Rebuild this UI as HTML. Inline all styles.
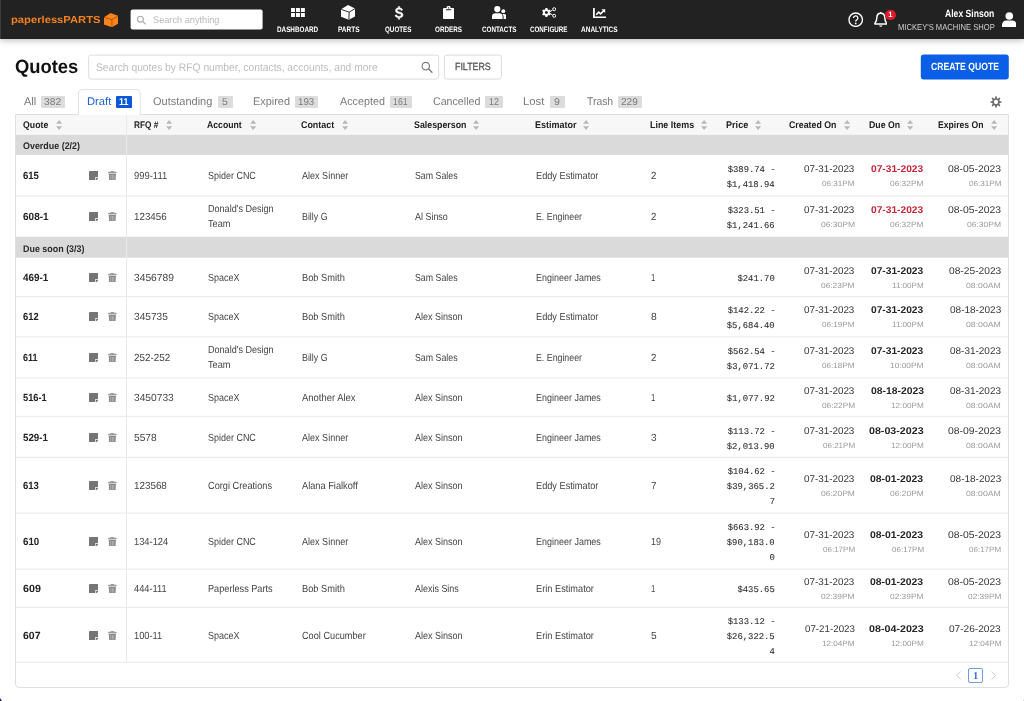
<!DOCTYPE html>
<html lang="en">
<head>
<meta charset="utf-8">
<title>Quotes - Paperless Parts</title>
<style>
*{box-sizing:border-box;margin:0;padding:0}
html,body{width:1024px;height:701px;overflow:hidden;background:#fff}
body{position:relative;font-family:"Liberation Sans",sans-serif;color:#333}
.page{position:absolute;left:0;top:0;width:1024px;height:701px;overflow:hidden;background:#fff;will-change:transform;text-rendering:geometricPrecision}
.t{position:absolute;white-space:nowrap;line-height:16px;height:16px}
.t>i{display:inline-block;font-style:normal;transform-origin:0 0}
.logo{font-family:"Liberation Sans",sans-serif;font-size:10.2px;font-weight:bold;color:#f5821f}
.gph{font-family:"Liberation Sans",sans-serif;font-size:9.5px;font-weight:normal;color:#b8b8b8}
.nav{font-family:"Liberation Sans",sans-serif;font-size:7.9px;font-weight:bold;color:#fff}
.uname{font-family:"Liberation Sans",sans-serif;font-size:10.5px;font-weight:bold;color:#fff}
.uorg{font-family:"Liberation Sans",sans-serif;font-size:8.6px;font-weight:normal;color:#cfcfcf}
.title{font-family:"Liberation Sans",sans-serif;font-size:19.2px;font-weight:bold;color:#111}
.qph{font-family:"Liberation Sans",sans-serif;font-size:11px;font-weight:normal;color:#bdbdbd}
.fbtn{font-family:"Liberation Sans",sans-serif;font-size:10.4px;font-weight:normal;color:#555}
.cbtn{font-family:"Liberation Sans",sans-serif;font-size:10.4px;font-weight:bold;color:#fff}
.tab{font-family:"Liberation Sans",sans-serif;font-size:11.2px;font-weight:normal;color:#7a7a7a}
.taba{font-family:"Liberation Sans",sans-serif;font-size:11.2px;font-weight:normal;color:#1b62d4}
.bd{font-family:"Liberation Sans",sans-serif;font-size:10px;font-weight:normal;color:#7a7a7a}
.bda{font-family:"Liberation Sans",sans-serif;font-size:10px;font-weight:bold;color:#fff}
.th{font-family:"Liberation Sans",sans-serif;font-size:9.7px;font-weight:bold;color:#222}
.gl{font-family:"Liberation Sans",sans-serif;font-size:9.6px;font-weight:bold;color:#2a2a2a}
.q{font-family:"Liberation Sans",sans-serif;font-size:10.4px;font-weight:bold;color:#222}
.c{font-family:"Liberation Sans",sans-serif;font-size:10.3px;font-weight:normal;color:#444}
.m{font-family:"Liberation Mono",monospace;font-size:8.9px;font-weight:normal;color:#303030}
.d{font-family:"Liberation Sans",sans-serif;font-size:9.8px;font-weight:normal;color:#363636}
.db{font-family:"Liberation Sans",sans-serif;font-size:9.8px;font-weight:bold;color:#262626}
.dr{font-family:"Liberation Sans",sans-serif;font-size:9.8px;font-weight:bold;color:#c9283a}
.tm{font-family:"Liberation Sans",sans-serif;font-size:7.6px;font-weight:normal;color:#9a9a9a}
.pg{font-family:"Liberation Serif",serif;font-size:10.5px;font-weight:bold;color:#3a76da}
.m{-webkit-text-stroke:.1px #303030}
.fbtn{-webkit-text-stroke:.3px #555}
/* ---------- top bar ---------- */
.top{position:absolute;left:0;top:0;width:1024px;height:39px;background:#222;box-shadow:0 1px 7px rgba(0,0,0,.3)}
.top .edge{position:absolute;left:0;top:0;width:1px;height:39px;background:#3c3c3e}
.top svg{position:absolute}
.cube{left:103.9px;top:12.95px;width:14.1px;height:14.3px}
.gsearch{position:absolute;left:130px;top:9px;width:132px;height:20px;transform:translate(.6px,.4px);background:#fff;border-radius:2px}
.gsearch svg{left:6.4px;top:5.6px;width:9.6px;height:9.6px}
.nv{fill:#fff}
.help{left:847.8px;top:11.7px;width:15.4px;height:15.4px}
.bell{left:873.6px;top:11.9px;width:13.6px;height:16.2px}
.badge{position:absolute;left:885.2px;top:9.8px;width:10.6px;height:10.6px;border-radius:50%;background:#e0192d}
.badge b{position:absolute;left:0;top:0;width:100%;text-align:center;color:#fff;font-size:7.6px;font-weight:bold;line-height:10.8px}
.uicon{left:1001.8px;top:11.6px;width:14.6px;height:15.5px}
/* ---------- page head ---------- */
.qsearch{position:absolute;left:88px;top:54px;width:351px;height:25px;transform:translate(.2px,.6px);border:1px solid #dcdcdc;border-radius:3px;background:#fff}
.qsearch svg{position:absolute;left:332.2px;top:6.2px;width:11.4px;height:11.4px}
.btn{position:absolute;top:54px;height:25px;border-radius:3px;transform:translateY(.6px)}
.btn.filters{left:444px;width:58px;transform:translate(-.1px,.6px);border:1px solid #dcdcdc;background:#fff}
.btn.create{left:920px;width:88px;background:#0b5fe6;transform:translate(.8px,.6px)}
/* ---------- tabs ---------- */
.tabbox{position:absolute;left:78px;top:89px;width:63px;height:26px;transform:translate(-.15px,.1px);border:1px solid #dedede;border-bottom:none;border-radius:5px 5px 0 0;background:#fff;z-index:3}
.tabs{position:absolute;left:0;top:0;z-index:4}
.bdg{position:absolute;top:96.2px;height:12px;background:#dcdcdc;border-radius:1px}
.bdg.on{background:#0b57d6}
.gear{position:absolute;left:990.37px;top:96.26px;width:12px;height:12px}
/* ---------- table ---------- */
.tbl{position:absolute;border:1px solid #dfdfdf;border-radius:0 0 4px 4px;background:#fff}
.tbl .row{position:absolute;left:0;width:100%}
.row.hrow{background:#f7f7f7}
.row.grow{background:#dadada}
.hline{position:absolute;left:0;width:100%;height:1px;background:#e8e8e8}
.sorti{position:absolute;top:5px;width:6.2px;height:10px}
.sort{display:block;width:6.2px;height:10px;fill:#b8b8b8}
.ici{position:absolute;width:9.6px;height:9.6px}
.ic{display:block}
.ic.note{width:9.6px;height:9.6px;fill:#757575}
.ic.trash{width:8.7px;height:9.5px}
.vline{position:absolute;top:0;width:1px;background:#e9e9e9}
.foot{position:absolute;left:0;width:100%;height:24px}
.chev{position:absolute;width:5.4px;height:9px}
.pgbox{position:absolute;width:15.4px;height:14.6px;border:1px solid #6d9ce6;border-radius:2px}
.corner-bl{position:absolute;left:-7.4px;top:696.5px;width:9px;height:9px;background:#2a2350;border-radius:0 60% 0 0}
.corner-br{position:absolute;left:1022.4px;top:697.5px;width:8px;height:8px;background:#c4c4c4;border-radius:70% 0 0 0}

</style>
</head>
<body>
<div class="page">
<div class="top">
<div class="edge"></div>
<span class="t logo" style="left:11.37px;top:13px"><i style="transform:scaleX(1.1007)">paperlessPARTS</i></span>
<svg class="cube" viewBox="0 0 14.1 14.3"><path d="M6.55 0 L14.1 2.9 V10.6 L7.9 14.3 L0 11.4 V4.3 Z" fill="#f8821c"/><path d="M0.2 4.4 L7.9 6.6 L13.9 3.1 M7.9 6.6 V14.1" fill="none" stroke="#a54e0c" stroke-width="0.85"/></svg>
<div class="gsearch"><svg viewBox="0 0 10 10"><circle cx="4" cy="4" r="3.1" fill="none" stroke="#a8a8a8" stroke-width="1.1"/><path d="M6.3 6.3 L9.4 9.4" stroke="#a8a8a8" stroke-width="1.2" stroke-linecap="round"/></svg></div>
<span class="t gph" style="left:153.34px;top:13px"><i style="transform:scaleX(0.9682)">Search anything</i></span>
<svg class="nv" style="left:291.4px;top:8.1px;width:13.9px;height:8.9px" viewBox="0 0 14 9"><path d="M0 0h4v4.1h-4zM5 0h4v4.1h-4zM10 0h4v4.1h-4zM0 5.1h4V9h-4zM5 5.1h4V9h-4zM10 5.1h4V9h-4z"/></svg><span class="t nav" style="left:277.34px;top:22px"><i style="transform:scaleX(0.8013)">DASHBOARD</i></span>
<svg class="nv" style="left:341.4px;top:5.1px;width:14.1px;height:14.7px" viewBox="0 0 14.1 14.7"><path d="M7.05 0 L14.1 3.5 V11.35 L7.8 14.7 L0 11.7 V4.3 Z"/><path d="M0.2 4.4 L8.2 7.2 L13.9 3.7 M8.2 7.2 L7.9 14.5" fill="none" stroke="#222" stroke-width="0.95"/></svg><span class="t nav" style="left:337.58px;top:22px"><i style="transform:scaleX(0.8234)">PARTS</i></span>
<svg class="nv" style="left:394.7px;top:5.8px;width:8px;height:13.8px;overflow:visible" viewBox="0 0 8.4 13.6"><path stroke="#fff" stroke-width=".55" stroke-linejoin="round" d="M3.55 0 H4.85 V1.5 C6.4 1.7 7.5 2.5 8 3.7 L6.5 4.4 C6.1 3.5 5.4 3.1 4.3 3.1 C3.1 3.1 2.4 3.6 2.4 4.3 C2.4 5.1 3.1 5.4 4.7 5.8 C6.9 6.3 8.4 7 8.4 9 C8.4 10.7 7.1 11.8 4.85 12 V13.6 H3.55 V12 C1.7 11.8 0.4 10.9 0 9.4 L1.6 8.8 C1.9 9.9 2.8 10.5 4.2 10.5 C5.6 10.5 6.5 10 6.5 9.1 C6.5 8.2 5.8 7.9 4 7.5 C2 7 0.55 6.3 0.55 4.4 C0.55 2.8 1.7 1.7 3.55 1.5 Z"/></svg><span class="t nav" style="left:385.25px;top:22px"><i style="transform:scaleX(0.7939)">QUOTES</i></span>
<svg class="nv" style="left:443.2px;top:6.1px;width:11.2px;height:13.2px" viewBox="0 0 11.4 13.2"><path d="M1.2 1.8 H3.6 A2.1 2.1 0 0 1 7.8 1.8 H10.2 A1.2 1.2 0 0 1 11.4 3 V12 A1.2 1.2 0 0 1 10.2 13.2 H1.2 A1.2 1.2 0 0 1 0 12 V3 A1.2 1.2 0 0 1 1.2 1.8 Z M5.7 1.1 A0.7 0.7 0 1 0 5.7 2.5 A0.7 0.7 0 1 0 5.7 1.1 Z M3 3.3 V4.3 H8.4 V3.3 Z" fill-rule="evenodd"/></svg><span class="t nav" style="left:435.25px;top:22px"><i style="transform:scaleX(0.7984)">ORDERS</i></span>
<svg class="nv" style="left:491.8px;top:6.2px;width:14.2px;height:13px" viewBox="0 0 14.2 13"><circle cx="5.3" cy="3.1" r="3.1"/><path d="M0 13 V10.6 A3.4 3.4 0 0 1 3.4 7.2 H7.2 A3.4 3.4 0 0 1 10.6 10.6 V13 Z"/><circle cx="11.3" cy="5.2" r="1.9"/><path d="M11.6 13 V10.4 A4.2 4.2 0 0 0 10.4 7.9 H12 A2.2 2.2 0 0 1 14.2 10.1 V13 Z"/></svg><span class="t nav" style="left:481.50px;top:22px"><i style="transform:scaleX(0.7964)">CONTACTS</i></span>
<svg class="nv" style="left:542px;top:7.4px;width:14.4px;height:11px" viewBox="0 0 14.4 11"><g transform="translate(4.4 5.5)"><path d="M-0.9 -4.4 H0.9 L1.2 -3.2 L2.3 -2.6 L3.4 -3 L4.3 -1.5 L3.4 -0.7 V0.7 L4.3 1.5 L3.4 3 L2.3 2.6 L1.2 3.2 L0.9 4.4 H-0.9 L-1.2 3.2 L-2.3 2.6 L-3.4 3 L-4.3 1.5 L-3.4 0.7 V-0.7 L-4.3 -1.5 L-3.4 -3 L-2.3 -2.6 L-1.2 -3.2 Z M0 -1.5 A1.5 1.5 0 1 0 0 1.5 A1.5 1.5 0 1 0 0 -1.5 Z" fill-rule="evenodd"/></g><circle cx="12.2" cy="2.2" r="1.5" fill="none" stroke="#fff" stroke-width="1"/><circle cx="12.2" cy="8.8" r="1.5" fill="none" stroke="#fff" stroke-width="1"/><path d="M8 4.6 L10.6 3 M8 6.4 L10.6 8" stroke="#fff" stroke-width="1"/></svg><span class="t nav" style="left:530.25px;top:22px"><i style="transform:scaleX(0.7907)">CONFIGURE</i></span>
<svg class="nv" style="left:592.5px;top:7.6px;width:13.4px;height:10.4px" viewBox="0 0 13.4 10.4"><path d="M0.9 0 V9.5 H13.4" fill="none" stroke="#fff" stroke-width="1.8"/><path d="M3.2 6.7 L5.7 4.2 L7.6 5.9 L11 2.5" fill="none" stroke="#fff" stroke-width="1.6"/><path d="M8.4 1.2 H12.2 V5 Z"/></svg><span class="t nav" style="left:581.07px;top:22px"><i style="transform:scaleX(0.8244)">ANALYTICS</i></span>
<svg class="help" viewBox="0 0 16 16"><circle cx="8" cy="8" r="7" fill="none" stroke="#fff" stroke-width="1.4"/><path d="M5.7 6.3 A2.3 2.3 0 1 1 8.9 8.4 C8.2 8.8 8 9.1 8 9.9" fill="none" stroke="#fff" stroke-width="1.4"/><circle cx="8" cy="11.9" r="0.95" fill="#fff"/></svg>
<svg class="bell" viewBox="0 0 14 16.7"><path d="M7 1.2 C4.2 1.2 2.9 3.4 2.9 6 C2.9 9.4 1.6 10.6 0.9 11.6 V12.3 H13.1 V11.6 C12.4 10.6 11.1 9.4 11.1 6 C11.1 3.4 9.8 1.2 7 1.2 Z" fill="none" stroke="#fff" stroke-width="1.5" stroke-linejoin="round"/><path d="M5.2 14 A1.9 1.9 0 0 0 8.8 14 Z" fill="#fff"/><circle cx="7" cy="0.9" r="0.9" fill="#fff"/></svg>
<div class="badge"><b>1</b></div>
<span class="t uname" style="left:945.33px;top:6px"><i style="transform:scaleX(0.8186)">Alex Sinson</i></span>
<span class="t uorg" style="left:897.59px;top:19px"><i style="transform:scaleX(0.8868)">MICKEY'S MACHINE SHOP</i></span>
<svg class="uicon" viewBox="0 0 15 15.5"><circle cx="7.5" cy="3.9" r="3.9" fill="#fff"/><path d="M0 15.5 V13 A4.4 4.4 0 0 1 4.4 8.6 H10.6 A4.4 4.4 0 0 1 15 13 V15.5 Z" fill="#fff"/></svg>
</div>

<span class="t title" style="left:15.06px;top:60px"><i style="transform:scaleX(0.9570)">Quotes</i></span>
<div class="qsearch"><svg viewBox="0 0 12 12"><circle cx="4.8" cy="4.8" r="3.9" fill="none" stroke="#777" stroke-width="1.25"/><path d="M7.7 7.7 L11.3 11.3" stroke="#777" stroke-width="1.4" stroke-linecap="round"/></svg></div>
<span class="t qph" style="left:96.39px;top:60px"><i style="transform:scaleX(0.9342)">Search quotes by RFQ number, contacts, accounts, and more</i></span>
<div class="btn filters"></div><span class="t fbtn" style="left:454.64px;top:60px"><i style="transform:scaleX(0.8521)">FILTERS</i></span>
<div class="btn create"></div><span class="t cbtn" style="left:930.55px;top:60px"><i style="transform:scaleX(0.8315)">CREATE QUOTE</i></span>

<div class="tabbox"></div>
<div class="tabs">
<span class="t tab" style="left:23.80px;top:94px"><i style="transform:scaleX(0.9787)">All</i></span><span class="bdg" style="left:41.00px;width:23.90px"></span><span class="t bd" style="left:44.39px;top:95px"><i style="transform:scaleX(1.0332)">382</i></span>
<span class="t taba" style="left:86.50px;top:94px"><i style="transform:scaleX(1.0025)">Draft</i></span><span class="bdg on" style="left:116.00px;width:16.40px"></span><span class="t bda" style="left:119.37px;top:95px"><i style="transform:scaleX(0.8857)">11</i></span>
<span class="t tab" style="left:153.25px;top:94px"><i style="transform:scaleX(0.9838)">Outstanding</i></span><span class="bdg" style="left:217.50px;width:15.00px"></span><span class="t bd" style="left:222.10px;top:95px"><i style="transform:scaleX(1.0468)">5</i></span>
<span class="t tab" style="left:252.88px;top:94px"><i style="transform:scaleX(0.9754)">Expired</i></span><span class="bdg" style="left:294.50px;width:23.50px"></span><span class="t bd" style="left:298.01px;top:95px"><i style="transform:scaleX(0.9685)">193</i></span>
<span class="t tab" style="left:340.00px;top:94px"><i style="transform:scaleX(0.9617)">Accepted</i></span><span class="bdg" style="left:390.00px;width:21.75px"></span><span class="t bd" style="left:393.41px;top:95px"><i style="transform:scaleX(0.8799)">161</i></span>
<span class="t tab" style="left:432.72px;top:94px"><i style="transform:scaleX(0.9523)">Cancelled</i></span><span class="bdg" style="left:485.00px;width:17.50px"></span><span class="t bd" style="left:488.73px;top:95px"><i style="transform:scaleX(0.8802)">12</i></span>
<span class="t tab" style="left:522.84px;top:94px"><i style="transform:scaleX(1.0128)">Lost</i></span><span class="bdg" style="left:549.50px;width:15.00px"></span><span class="t bd" style="left:554.06px;top:95px"><i style="transform:scaleX(1.0596)">9</i></span>
<span class="t tab" style="left:586.54px;top:94px"><i style="transform:scaleX(0.9248)">Trash</i></span><span class="bdg" style="left:617.50px;width:24.25px"></span><span class="t bd" style="left:621.22px;top:95px"><i style="transform:scaleX(1.0051)">229</i></span>
</div>
<svg class="gear" viewBox="-6 -6 12 12"><path d="M-1.10 -3.59 L-0.55 -5.67 L0.55 -5.67 L1.10 -3.59 L1.76 -3.31 L3.63 -4.40 L4.40 -3.63 L3.31 -1.76 L3.59 -1.10 L5.67 -0.55 L5.67 0.55 L3.59 1.10 L3.31 1.76 L4.40 3.63 L3.63 4.40 L1.76 3.31 L1.10 3.59 L0.55 5.67 L-0.55 5.67 L-1.10 3.59 L-1.76 3.31 L-3.63 4.40 L-4.40 3.63 L-3.31 1.76 L-3.59 1.10 L-5.67 0.55 L-5.67 -0.55 L-3.59 -1.10 L-3.31 -1.76 L-4.40 -3.63 L-3.63 -4.40 L-1.76 -3.31 Z M0 -2.15 A2.15 2.15 0 1 0 0 2.15 A2.15 2.15 0 1 0 0 -2.15 Z" fill="#6b6b6b" fill-rule="evenodd"/></svg>
<div class="tbl" style="left:15px;top:114px;width:994px;height:574px">
<div class="row hrow" style="top:0px;height:20px">
<span class="t th" style="left:7.40px;top:3px"><i style="transform:scaleX(0.9019)">Quote</i></span><span class="sorti" style="left:39.90px"><svg class="sort" viewBox="0 0 6 10"><path d="M3 0 L6 3.7 H0 Z M3 10 L6 6.3 H0 Z"/></svg></span>
<span class="t th" style="left:117.71px;top:3px"><i style="transform:scaleX(0.8535)">RFQ #</i></span><span class="sorti" style="left:150.25px"><svg class="sort" viewBox="0 0 6 10"><path d="M3 0 L6 3.7 H0 Z M3 10 L6 6.3 H0 Z"/></svg></span>
<span class="t th" style="left:191.33px;top:3px"><i style="transform:scaleX(0.8954)">Account</i></span><span class="sorti" style="left:233.60px"><svg class="sort" viewBox="0 0 6 10"><path d="M3 0 L6 3.7 H0 Z M3 10 L6 6.3 H0 Z"/></svg></span>
<span class="t th" style="left:285.39px;top:3px"><i style="transform:scaleX(0.9189)">Contact</i></span><span class="sorti" style="left:325.80px"><svg class="sort" viewBox="0 0 6 10"><path d="M3 0 L6 3.7 H0 Z M3 10 L6 6.3 H0 Z"/></svg></span>
<span class="t th" style="left:398.28px;top:3px"><i style="transform:scaleX(0.9102)">Salesperson</i></span><span class="sorti" style="left:457.10px"><svg class="sort" viewBox="0 0 6 10"><path d="M3 0 L6 3.7 H0 Z M3 10 L6 6.3 H0 Z"/></svg></span>
<span class="t th" style="left:519.17px;top:3px"><i style="transform:scaleX(0.9267)">Estimator</i></span><span class="sorti" style="left:567.40px"><svg class="sort" viewBox="0 0 6 10"><path d="M3 0 L6 3.7 H0 Z M3 10 L6 6.3 H0 Z"/></svg></span>
<span class="t th" style="left:633.92px;top:3px"><i style="transform:scaleX(0.9203)">Line Items</i></span><span class="sorti" style="left:684.60px"><svg class="sort" viewBox="0 0 6 10"><path d="M3 0 L6 3.7 H0 Z M3 10 L6 6.3 H0 Z"/></svg></span>
<span class="t th" style="left:710.31px;top:3px"><i style="transform:scaleX(0.9387)">Price</i></span><span class="sorti" style="left:739.40px"><svg class="sort" viewBox="0 0 6 10"><path d="M3 0 L6 3.7 H0 Z M3 10 L6 6.3 H0 Z"/></svg></span>
<span class="t th" style="left:773.35px;top:3px"><i style="transform:scaleX(0.9083)">Created On</i></span><span class="sorti" style="left:828.00px"><svg class="sort" viewBox="0 0 6 10"><path d="M3 0 L6 3.7 H0 Z M3 10 L6 6.3 H0 Z"/></svg></span>
<span class="t th" style="left:852.93px;top:3px"><i style="transform:scaleX(0.9017)">Due On</i></span><span class="sorti" style="left:890.90px"><svg class="sort" viewBox="0 0 6 10"><path d="M3 0 L6 3.7 H0 Z M3 10 L6 6.3 H0 Z"/></svg></span>
<span class="t th" style="left:921.94px;top:3px"><i style="transform:scaleX(0.8901)">Expires On</i></span><span class="sorti" style="left:974.70px"><svg class="sort" viewBox="0 0 6 10"><path d="M3 0 L6 3.7 H0 Z M3 10 L6 6.3 H0 Z"/></svg></span>
</div>
<div class="row grow" style="top:19px;height:20px;transform:translateY(0.90px)"><span class="t gl" style="left:7.39px;top:4px"><i style="transform:scaleX(0.9296)">Overdue (2/2)</i></span></div>
<div class="row drow" style="top:40px;height:41px">
<span class="t q" style="left:7.26px;top:14px"><i style="transform:scaleX(0.9183)">615</i></span><span class="ici" style="left:72.70px;top:15.7px"><svg class="ic note" viewBox="0 0 10 10"><path d="M0 1 A1 1 0 0 1 1 0 H9 A1 1 0 0 1 10 1 V6.3 H7.3 A1 1 0 0 0 6.3 7.3 V10 H1 A1 1 0 0 1 0 9 Z"/><path d="M7 10 V7.6 A0.6 0.6 0 0 1 7.6 7 H10 V7.1 Q10 7.5 9.75 7.75 L7.75 9.75 Q7.5 10 7.1 10 Z"/></svg></span><span class="ici" style="left:91.90px;top:15.8px"><svg class="ic trash" viewBox="0 0 9 10"><path d="M3 0.1 H6 L6.5 0.9 H8.6 A0.4 0.4 0 0 1 9 1.3 V2.3 H0 V1.3 A0.4 0.4 0 0 1 0.4 0.9 H2.5 Z" fill="#9c9c9c"/><path d="M0.7 3 H8.3 L7.9 9.2 A0.85 0.85 0 0 1 7.05 10 H1.95 A0.85 0.85 0 0 1 1.1 9.2 Z" fill="#8a8a8a"/><path d="M2.5 4.1 H3.3 V8.9 H2.5 Z M4.1 4.1 H4.9 V8.9 H4.1 Z M5.7 4.1 H6.5 V8.9 H5.7 Z" fill="#b9b9b9"/></svg></span><span class="t c" style="left:117.66px;top:14px"><i style="transform:scaleX(0.9151)">999-111</i></span><span class="t c" style="left:191.50px;top:14px"><i style="transform:scaleX(0.8708)">Spider CNC</i></span><span class="t c" style="left:286.05px;top:14px"><i style="transform:scaleX(0.8791)">Alex Sinner</i></span><span class="t c" style="left:398.50px;top:14px"><i style="transform:scaleX(0.8554)">Sam Sales</i></span><span class="t c" style="left:519.76px;top:14px"><i style="transform:scaleX(0.8937)">Eddy Estimator</i></span><span class="t c" style="left:634.60px;top:14px"><i style="transform:scaleX(0.9322)">2</i></span>
<span class="t m" style="left:711.66px;top:7px"><i style="transform:scaleX(1.0000)">$389.74 -</i></span><span class="t m" style="left:710.68px;top:22px"><i style="transform:scaleX(1.0000)">$1,418.94</i></span><span class="t d" style="left:788.16px;top:7px"><i style="transform:scaleX(1.0044)">07-31-2023</i></span><span class="t tm" style="left:806.32px;top:21px"><i style="transform:scaleX(1.0656)">06:31PM</i></span><span class="t dr" style="left:855.24px;top:7px"><i style="transform:scaleX(1.0418)">07-31-2023</i></span><span class="t tm" style="left:874.28px;top:21px"><i style="transform:scaleX(1.1005)">06:32PM</i></span><span class="t d" style="left:932.02px;top:7px"><i style="transform:scaleX(1.0595)">08-05-2023</i></span><span class="t tm" style="left:952.92px;top:21px"><i style="transform:scaleX(1.0656)">06:31PM</i></span>
</div>
<div class="row drow" style="top:81px;height:41px">
<span class="t q" style="left:7.26px;top:14px"><i style="transform:scaleX(0.9637)">608-1</i></span><span class="ici" style="left:72.70px;top:15.7px"><svg class="ic note" viewBox="0 0 10 10"><path d="M0 1 A1 1 0 0 1 1 0 H9 A1 1 0 0 1 10 1 V6.3 H7.3 A1 1 0 0 0 6.3 7.3 V10 H1 A1 1 0 0 1 0 9 Z"/><path d="M7 10 V7.6 A0.6 0.6 0 0 1 7.6 7 H10 V7.1 Q10 7.5 9.75 7.75 L7.75 9.75 Q7.5 10 7.1 10 Z"/></svg></span><span class="ici" style="left:91.90px;top:15.8px"><svg class="ic trash" viewBox="0 0 9 10"><path d="M3 0.1 H6 L6.5 0.9 H8.6 A0.4 0.4 0 0 1 9 1.3 V2.3 H0 V1.3 A0.4 0.4 0 0 1 0.4 0.9 H2.5 Z" fill="#9c9c9c"/><path d="M0.7 3 H8.3 L7.9 9.2 A0.85 0.85 0 0 1 7.05 10 H1.95 A0.85 0.85 0 0 1 1.1 9.2 Z" fill="#8a8a8a"/><path d="M2.5 4.1 H3.3 V8.9 H2.5 Z M4.1 4.1 H4.9 V8.9 H4.1 Z M5.7 4.1 H6.5 V8.9 H5.7 Z" fill="#b9b9b9"/></svg></span><span class="t c" style="left:117.66px;top:14px"><i style="transform:scaleX(0.9515)">123456</i></span><span class="t c" style="left:191.50px;top:6px"><i style="transform:scaleX(0.8793)">Donald's Design</i></span><span class="t c" style="left:191.50px;top:21px"><i style="transform:scaleX(0.8944)">Team</i></span><span class="t c" style="left:286.05px;top:14px"><i style="transform:scaleX(0.8573)">Billy G</i></span><span class="t c" style="left:398.50px;top:14px"><i style="transform:scaleX(0.8680)">Al Sinso</i></span><span class="t c" style="left:519.76px;top:14px"><i style="transform:scaleX(0.8547)">E. Engineer</i></span><span class="t c" style="left:634.60px;top:14px"><i style="transform:scaleX(0.9322)">2</i></span>
<span class="t m" style="left:711.66px;top:7px"><i style="transform:scaleX(1.0000)">$323.51 -</i></span><span class="t m" style="left:710.77px;top:22px"><i style="transform:scaleX(1.0000)">$1,241.66</i></span><span class="t d" style="left:788.16px;top:7px"><i style="transform:scaleX(1.0044)">07-31-2023</i></span><span class="t tm" style="left:804.59px;top:21px"><i style="transform:scaleX(1.1236)">06:30PM</i></span><span class="t dr" style="left:855.24px;top:7px"><i style="transform:scaleX(1.0418)">07-31-2023</i></span><span class="t tm" style="left:874.28px;top:21px"><i style="transform:scaleX(1.1005)">06:32PM</i></span><span class="t d" style="left:932.02px;top:7px"><i style="transform:scaleX(1.0595)">08-05-2023</i></span><span class="t tm" style="left:951.19px;top:21px"><i style="transform:scaleX(1.1236)">06:30PM</i></span>
</div>
<div class="row grow" style="top:121px;height:21px;transform:translateY(0.75px)"><span class="t gl" style="left:7.17px;top:5px"><i style="transform:scaleX(0.9300)">Due soon (3/3)</i></span></div>
<div class="row drow" style="top:143px;height:39px">
<span class="t q" style="left:7.26px;top:13px"><i style="transform:scaleX(0.9514)">469-1</i></span><span class="ici" style="left:72.70px;top:14.7px"><svg class="ic note" viewBox="0 0 10 10"><path d="M0 1 A1 1 0 0 1 1 0 H9 A1 1 0 0 1 10 1 V6.3 H7.3 A1 1 0 0 0 6.3 7.3 V10 H1 A1 1 0 0 1 0 9 Z"/><path d="M7 10 V7.6 A0.6 0.6 0 0 1 7.6 7 H10 V7.1 Q10 7.5 9.75 7.75 L7.75 9.75 Q7.5 10 7.1 10 Z"/></svg></span><span class="ici" style="left:91.90px;top:14.8px"><svg class="ic trash" viewBox="0 0 9 10"><path d="M3 0.1 H6 L6.5 0.9 H8.6 A0.4 0.4 0 0 1 9 1.3 V2.3 H0 V1.3 A0.4 0.4 0 0 1 0.4 0.9 H2.5 Z" fill="#9c9c9c"/><path d="M0.7 3 H8.3 L7.9 9.2 A0.85 0.85 0 0 1 7.05 10 H1.95 A0.85 0.85 0 0 1 1.1 9.2 Z" fill="#8a8a8a"/><path d="M2.5 4.1 H3.3 V8.9 H2.5 Z M4.1 4.1 H4.9 V8.9 H4.1 Z M5.7 4.1 H6.5 V8.9 H5.7 Z" fill="#b9b9b9"/></svg></span><span class="t c" style="left:117.66px;top:13px"><i style="transform:scaleX(0.9961)">3456789</i></span><span class="t c" style="left:191.50px;top:13px"><i style="transform:scaleX(0.8742)">SpaceX</i></span><span class="t c" style="left:286.05px;top:13px"><i style="transform:scaleX(0.9021)">Bob Smith</i></span><span class="t c" style="left:398.50px;top:13px"><i style="transform:scaleX(0.8554)">Sam Sales</i></span><span class="t c" style="left:519.76px;top:13px"><i style="transform:scaleX(0.8713)">Engineer James</i></span><span class="t c" style="left:634.60px;top:13px"><i style="transform:scaleX(0.7492)">1</i></span>
<span class="t m" style="left:721.45px;top:13px"><i style="transform:scaleX(1.0000)">$241.70</i></span><span class="t d" style="left:788.16px;top:6px"><i style="transform:scaleX(1.0044)">07-31-2023</i></span><span class="t tm" style="left:805.28px;top:20px"><i style="transform:scaleX(1.1005)">06:23PM</i></span><span class="t db" style="left:855.24px;top:6px"><i style="transform:scaleX(1.0418)">07-31-2023</i></span><span class="t tm" style="left:875.99px;top:20px"><i style="transform:scaleX(1.0633)">11:00PM</i></span><span class="t d" style="left:932.82px;top:6px"><i style="transform:scaleX(1.0434)">08-25-2023</i></span><span class="t tm" style="left:950.48px;top:20px"><i style="transform:scaleX(1.1473)">08:00AM</i></span>
</div>
<div class="row drow" style="top:182px;height:40px">
<span class="t q" style="left:7.26px;top:13px"><i style="transform:scaleX(0.9029)">612</i></span><span class="ici" style="left:72.70px;top:14.7px"><svg class="ic note" viewBox="0 0 10 10"><path d="M0 1 A1 1 0 0 1 1 0 H9 A1 1 0 0 1 10 1 V6.3 H7.3 A1 1 0 0 0 6.3 7.3 V10 H1 A1 1 0 0 1 0 9 Z"/><path d="M7 10 V7.6 A0.6 0.6 0 0 1 7.6 7 H10 V7.1 Q10 7.5 9.75 7.75 L7.75 9.75 Q7.5 10 7.1 10 Z"/></svg></span><span class="ici" style="left:91.90px;top:14.8px"><svg class="ic trash" viewBox="0 0 9 10"><path d="M3 0.1 H6 L6.5 0.9 H8.6 A0.4 0.4 0 0 1 9 1.3 V2.3 H0 V1.3 A0.4 0.4 0 0 1 0.4 0.9 H2.5 Z" fill="#9c9c9c"/><path d="M0.7 3 H8.3 L7.9 9.2 A0.85 0.85 0 0 1 7.05 10 H1.95 A0.85 0.85 0 0 1 1.1 9.2 Z" fill="#8a8a8a"/><path d="M2.5 4.1 H3.3 V8.9 H2.5 Z M4.1 4.1 H4.9 V8.9 H4.1 Z M5.7 4.1 H6.5 V8.9 H5.7 Z" fill="#b9b9b9"/></svg></span><span class="t c" style="left:117.66px;top:13px"><i style="transform:scaleX(0.9848)">345735</i></span><span class="t c" style="left:191.50px;top:13px"><i style="transform:scaleX(0.8742)">SpaceX</i></span><span class="t c" style="left:286.05px;top:13px"><i style="transform:scaleX(0.9021)">Bob Smith</i></span><span class="t c" style="left:398.50px;top:13px"><i style="transform:scaleX(0.8757)">Alex Sinson</i></span><span class="t c" style="left:519.76px;top:13px"><i style="transform:scaleX(0.8937)">Eddy Estimator</i></span><span class="t c" style="left:634.60px;top:13px"><i style="transform:scaleX(1.0021)">8</i></span>
<span class="t m" style="left:711.66px;top:6px"><i style="transform:scaleX(1.0000)">$142.22 -</i></span><span class="t m" style="left:710.77px;top:21px"><i style="transform:scaleX(1.0000)">$5,684.40</i></span><span class="t d" style="left:788.16px;top:6px"><i style="transform:scaleX(1.0044)">07-31-2023</i></span><span class="t tm" style="left:806.18px;top:20px"><i style="transform:scaleX(1.0701)">06:19PM</i></span><span class="t db" style="left:855.24px;top:6px"><i style="transform:scaleX(1.0418)">07-31-2023</i></span><span class="t tm" style="left:875.99px;top:20px"><i style="transform:scaleX(1.0633)">11:00PM</i></span><span class="t d" style="left:933.89px;top:6px"><i style="transform:scaleX(1.0217)">08-18-2023</i></span><span class="t tm" style="left:950.48px;top:20px"><i style="transform:scaleX(1.1473)">08:00AM</i></span>
</div>
<div class="row drow" style="top:222px;height:41px">
<span class="t q" style="left:7.26px;top:14px"><i style="transform:scaleX(0.8611)">611</i></span><span class="ici" style="left:72.70px;top:15.7px"><svg class="ic note" viewBox="0 0 10 10"><path d="M0 1 A1 1 0 0 1 1 0 H9 A1 1 0 0 1 10 1 V6.3 H7.3 A1 1 0 0 0 6.3 7.3 V10 H1 A1 1 0 0 1 0 9 Z"/><path d="M7 10 V7.6 A0.6 0.6 0 0 1 7.6 7 H10 V7.1 Q10 7.5 9.75 7.75 L7.75 9.75 Q7.5 10 7.1 10 Z"/></svg></span><span class="ici" style="left:91.90px;top:15.8px"><svg class="ic trash" viewBox="0 0 9 10"><path d="M3 0.1 H6 L6.5 0.9 H8.6 A0.4 0.4 0 0 1 9 1.3 V2.3 H0 V1.3 A0.4 0.4 0 0 1 0.4 0.9 H2.5 Z" fill="#9c9c9c"/><path d="M0.7 3 H8.3 L7.9 9.2 A0.85 0.85 0 0 1 7.05 10 H1.95 A0.85 0.85 0 0 1 1.1 9.2 Z" fill="#8a8a8a"/><path d="M2.5 4.1 H3.3 V8.9 H2.5 Z M4.1 4.1 H4.9 V8.9 H4.1 Z M5.7 4.1 H6.5 V8.9 H5.7 Z" fill="#b9b9b9"/></svg></span><span class="t c" style="left:117.66px;top:14px"><i style="transform:scaleX(0.9566)">252-252</i></span><span class="t c" style="left:191.50px;top:6px"><i style="transform:scaleX(0.8793)">Donald's Design</i></span><span class="t c" style="left:191.50px;top:21px"><i style="transform:scaleX(0.8944)">Team</i></span><span class="t c" style="left:286.05px;top:14px"><i style="transform:scaleX(0.8573)">Billy G</i></span><span class="t c" style="left:398.50px;top:14px"><i style="transform:scaleX(0.8554)">Sam Sales</i></span><span class="t c" style="left:519.76px;top:14px"><i style="transform:scaleX(0.8547)">E. Engineer</i></span><span class="t c" style="left:634.60px;top:14px"><i style="transform:scaleX(0.9322)">2</i></span>
<span class="t m" style="left:711.66px;top:7px"><i style="transform:scaleX(1.0000)">$562.54 -</i></span><span class="t m" style="left:710.86px;top:22px"><i style="transform:scaleX(1.0000)">$3,071.72</i></span><span class="t d" style="left:788.16px;top:7px"><i style="transform:scaleX(1.0044)">07-31-2023</i></span><span class="t tm" style="left:806.11px;top:21px"><i style="transform:scaleX(1.0727)">06:18PM</i></span><span class="t db" style="left:855.24px;top:7px"><i style="transform:scaleX(1.0418)">07-31-2023</i></span><span class="t tm" style="left:874.25px;top:21px"><i style="transform:scaleX(1.1014)">10:00PM</i></span><span class="t d" style="left:934.14px;top:7px"><i style="transform:scaleX(1.0169)">08-31-2023</i></span><span class="t tm" style="left:950.48px;top:21px"><i style="transform:scaleX(1.1473)">08:00AM</i></span>
</div>
<div class="row drow" style="top:263px;height:39px">
<span class="t q" style="left:7.26px;top:13px"><i style="transform:scaleX(0.8939)">516-1</i></span><span class="ici" style="left:72.70px;top:14.7px"><svg class="ic note" viewBox="0 0 10 10"><path d="M0 1 A1 1 0 0 1 1 0 H9 A1 1 0 0 1 10 1 V6.3 H7.3 A1 1 0 0 0 6.3 7.3 V10 H1 A1 1 0 0 1 0 9 Z"/><path d="M7 10 V7.6 A0.6 0.6 0 0 1 7.6 7 H10 V7.1 Q10 7.5 9.75 7.75 L7.75 9.75 Q7.5 10 7.1 10 Z"/></svg></span><span class="ici" style="left:91.90px;top:14.8px"><svg class="ic trash" viewBox="0 0 9 10"><path d="M3 0.1 H6 L6.5 0.9 H8.6 A0.4 0.4 0 0 1 9 1.3 V2.3 H0 V1.3 A0.4 0.4 0 0 1 0.4 0.9 H2.5 Z" fill="#9c9c9c"/><path d="M0.7 3 H8.3 L7.9 9.2 A0.85 0.85 0 0 1 7.05 10 H1.95 A0.85 0.85 0 0 1 1.1 9.2 Z" fill="#8a8a8a"/><path d="M2.5 4.1 H3.3 V8.9 H2.5 Z M4.1 4.1 H4.9 V8.9 H4.1 Z M5.7 4.1 H6.5 V8.9 H5.7 Z" fill="#b9b9b9"/></svg></span><span class="t c" style="left:117.66px;top:13px"><i style="transform:scaleX(0.9925)">3450733</i></span><span class="t c" style="left:191.50px;top:13px"><i style="transform:scaleX(0.8742)">SpaceX</i></span><span class="t c" style="left:286.05px;top:13px"><i style="transform:scaleX(0.9164)">Another Alex</i></span><span class="t c" style="left:398.50px;top:13px"><i style="transform:scaleX(0.8757)">Alex Sinson</i></span><span class="t c" style="left:519.76px;top:13px"><i style="transform:scaleX(0.8713)">Engineer James</i></span><span class="t c" style="left:634.60px;top:13px"><i style="transform:scaleX(0.7492)">1</i></span>
<span class="t m" style="left:710.86px;top:13px"><i style="transform:scaleX(1.0000)">$1,077.92</i></span><span class="t d" style="left:788.16px;top:6px"><i style="transform:scaleX(1.0044)">07-31-2023</i></span><span class="t tm" style="left:805.60px;top:20px"><i style="transform:scaleX(1.0896)">06:22PM</i></span><span class="t db" style="left:854.53px;top:6px"><i style="transform:scaleX(1.0561)">08-18-2023</i></span><span class="t tm" style="left:874.95px;top:20px"><i style="transform:scaleX(1.0780)">12:00PM</i></span><span class="t d" style="left:934.14px;top:6px"><i style="transform:scaleX(1.0169)">08-31-2023</i></span><span class="t tm" style="left:950.48px;top:20px"><i style="transform:scaleX(1.1473)">08:00AM</i></span>
</div>
<div class="row drow" style="top:302px;height:41px">
<span class="t q" style="left:7.26px;top:14px"><i style="transform:scaleX(0.9385)">529-1</i></span><span class="ici" style="left:72.70px;top:15.7px"><svg class="ic note" viewBox="0 0 10 10"><path d="M0 1 A1 1 0 0 1 1 0 H9 A1 1 0 0 1 10 1 V6.3 H7.3 A1 1 0 0 0 6.3 7.3 V10 H1 A1 1 0 0 1 0 9 Z"/><path d="M7 10 V7.6 A0.6 0.6 0 0 1 7.6 7 H10 V7.1 Q10 7.5 9.75 7.75 L7.75 9.75 Q7.5 10 7.1 10 Z"/></svg></span><span class="ici" style="left:91.90px;top:15.8px"><svg class="ic trash" viewBox="0 0 9 10"><path d="M3 0.1 H6 L6.5 0.9 H8.6 A0.4 0.4 0 0 1 9 1.3 V2.3 H0 V1.3 A0.4 0.4 0 0 1 0.4 0.9 H2.5 Z" fill="#9c9c9c"/><path d="M0.7 3 H8.3 L7.9 9.2 A0.85 0.85 0 0 1 7.05 10 H1.95 A0.85 0.85 0 0 1 1.1 9.2 Z" fill="#8a8a8a"/><path d="M2.5 4.1 H3.3 V8.9 H2.5 Z M4.1 4.1 H4.9 V8.9 H4.1 Z M5.7 4.1 H6.5 V8.9 H5.7 Z" fill="#b9b9b9"/></svg></span><span class="t c" style="left:117.66px;top:14px"><i style="transform:scaleX(0.9891)">5578</i></span><span class="t c" style="left:191.50px;top:14px"><i style="transform:scaleX(0.8708)">Spider CNC</i></span><span class="t c" style="left:286.05px;top:14px"><i style="transform:scaleX(0.8791)">Alex Sinner</i></span><span class="t c" style="left:398.50px;top:14px"><i style="transform:scaleX(0.8757)">Alex Sinson</i></span><span class="t c" style="left:519.76px;top:14px"><i style="transform:scaleX(0.8713)">Engineer James</i></span><span class="t c" style="left:634.60px;top:14px"><i style="transform:scaleX(0.9738)">3</i></span>
<span class="t m" style="left:711.66px;top:7px"><i style="transform:scaleX(1.0000)">$113.72 -</i></span><span class="t m" style="left:710.77px;top:22px"><i style="transform:scaleX(1.0000)">$2,013.90</i></span><span class="t d" style="left:788.16px;top:7px"><i style="transform:scaleX(1.0044)">07-31-2023</i></span><span class="t tm" style="left:806.64px;top:21px"><i style="transform:scaleX(1.0547)">06:21PM</i></span><span class="t db" style="left:852.91px;top:7px"><i style="transform:scaleX(1.0887)">08-03-2023</i></span><span class="t tm" style="left:874.95px;top:21px"><i style="transform:scaleX(1.0780)">12:00PM</i></span><span class="t d" style="left:931.98px;top:7px"><i style="transform:scaleX(1.0602)">08-09-2023</i></span><span class="t tm" style="left:950.48px;top:21px"><i style="transform:scaleX(1.1473)">08:00AM</i></span>
</div>
<div class="row drow" style="top:343px;height:56px">
<span class="t q" style="left:7.26px;top:21px"><i style="transform:scaleX(0.9188)">613</i></span><span class="ici" style="left:72.70px;top:22.7px"><svg class="ic note" viewBox="0 0 10 10"><path d="M0 1 A1 1 0 0 1 1 0 H9 A1 1 0 0 1 10 1 V6.3 H7.3 A1 1 0 0 0 6.3 7.3 V10 H1 A1 1 0 0 1 0 9 Z"/><path d="M7 10 V7.6 A0.6 0.6 0 0 1 7.6 7 H10 V7.1 Q10 7.5 9.75 7.75 L7.75 9.75 Q7.5 10 7.1 10 Z"/></svg></span><span class="ici" style="left:91.90px;top:22.8px"><svg class="ic trash" viewBox="0 0 9 10"><path d="M3 0.1 H6 L6.5 0.9 H8.6 A0.4 0.4 0 0 1 9 1.3 V2.3 H0 V1.3 A0.4 0.4 0 0 1 0.4 0.9 H2.5 Z" fill="#9c9c9c"/><path d="M0.7 3 H8.3 L7.9 9.2 A0.85 0.85 0 0 1 7.05 10 H1.95 A0.85 0.85 0 0 1 1.1 9.2 Z" fill="#8a8a8a"/><path d="M2.5 4.1 H3.3 V8.9 H2.5 Z M4.1 4.1 H4.9 V8.9 H4.1 Z M5.7 4.1 H6.5 V8.9 H5.7 Z" fill="#b9b9b9"/></svg></span><span class="t c" style="left:117.66px;top:21px"><i style="transform:scaleX(0.9560)">123568</i></span><span class="t c" style="left:191.50px;top:21px"><i style="transform:scaleX(0.8944)">Corgi Creations</i></span><span class="t c" style="left:286.05px;top:21px"><i style="transform:scaleX(0.8973)">Alana Fialkoff</i></span><span class="t c" style="left:398.50px;top:21px"><i style="transform:scaleX(0.8757)">Alex Sinson</i></span><span class="t c" style="left:519.76px;top:21px"><i style="transform:scaleX(0.8937)">Eddy Estimator</i></span><span class="t c" style="left:634.60px;top:21px"><i style="transform:scaleX(0.9695)">7</i></span>
<span class="t m" style="left:711.66px;top:6px"><i style="transform:scaleX(1.0000)">$104.62 -</i></span><span class="t m" style="left:710.86px;top:21px"><i style="transform:scaleX(1.0000)">$39,365.2</i></span><span class="t m" style="left:753.63px;top:36px"><i style="transform:scaleX(1.0000)">7</i></span><span class="t d" style="left:788.16px;top:14px"><i style="transform:scaleX(1.0044)">07-31-2023</i></span><span class="t tm" style="left:804.91px;top:28px"><i style="transform:scaleX(1.1127)">06:20PM</i></span><span class="t db" style="left:854.31px;top:14px"><i style="transform:scaleX(1.0605)">08-01-2023</i></span><span class="t tm" style="left:873.91px;top:28px"><i style="transform:scaleX(1.1127)">06:20PM</i></span><span class="t d" style="left:933.89px;top:14px"><i style="transform:scaleX(1.0217)">08-18-2023</i></span><span class="t tm" style="left:950.48px;top:28px"><i style="transform:scaleX(1.1473)">08:00AM</i></span>
</div>
<div class="row drow" style="top:399px;height:56px">
<span class="t q" style="left:7.26px;top:21px"><i style="transform:scaleX(0.9373)">610</i></span><span class="ici" style="left:72.70px;top:22.7px"><svg class="ic note" viewBox="0 0 10 10"><path d="M0 1 A1 1 0 0 1 1 0 H9 A1 1 0 0 1 10 1 V6.3 H7.3 A1 1 0 0 0 6.3 7.3 V10 H1 A1 1 0 0 1 0 9 Z"/><path d="M7 10 V7.6 A0.6 0.6 0 0 1 7.6 7 H10 V7.1 Q10 7.5 9.75 7.75 L7.75 9.75 Q7.5 10 7.1 10 Z"/></svg></span><span class="ici" style="left:91.90px;top:22.8px"><svg class="ic trash" viewBox="0 0 9 10"><path d="M3 0.1 H6 L6.5 0.9 H8.6 A0.4 0.4 0 0 1 9 1.3 V2.3 H0 V1.3 A0.4 0.4 0 0 1 0.4 0.9 H2.5 Z" fill="#9c9c9c"/><path d="M0.7 3 H8.3 L7.9 9.2 A0.85 0.85 0 0 1 7.05 10 H1.95 A0.85 0.85 0 0 1 1.1 9.2 Z" fill="#8a8a8a"/><path d="M2.5 4.1 H3.3 V8.9 H2.5 Z M4.1 4.1 H4.9 V8.9 H4.1 Z M5.7 4.1 H6.5 V8.9 H5.7 Z" fill="#b9b9b9"/></svg></span><span class="t c" style="left:117.66px;top:21px"><i style="transform:scaleX(0.9048)">134-124</i></span><span class="t c" style="left:191.50px;top:21px"><i style="transform:scaleX(0.8708)">Spider CNC</i></span><span class="t c" style="left:286.05px;top:21px"><i style="transform:scaleX(0.8791)">Alex Sinner</i></span><span class="t c" style="left:398.50px;top:21px"><i style="transform:scaleX(0.8757)">Alex Sinson</i></span><span class="t c" style="left:519.76px;top:21px"><i style="transform:scaleX(0.8713)">Engineer James</i></span><span class="t c" style="left:634.60px;top:21px"><i style="transform:scaleX(0.8783)">19</i></span>
<span class="t m" style="left:711.66px;top:6px"><i style="transform:scaleX(1.0000)">$663.92 -</i></span><span class="t m" style="left:710.77px;top:21px"><i style="transform:scaleX(1.0000)">$90,183.0</i></span><span class="t m" style="left:753.49px;top:36px"><i style="transform:scaleX(1.0000)">0</i></span><span class="t d" style="left:788.16px;top:14px"><i style="transform:scaleX(1.0044)">07-31-2023</i></span><span class="t tm" style="left:806.64px;top:28px"><i style="transform:scaleX(1.0547)">06:17PM</i></span><span class="t db" style="left:854.31px;top:14px"><i style="transform:scaleX(1.0605)">08-01-2023</i></span><span class="t tm" style="left:875.64px;top:28px"><i style="transform:scaleX(1.0547)">06:17PM</i></span><span class="t d" style="left:932.02px;top:14px"><i style="transform:scaleX(1.0595)">08-05-2023</i></span><span class="t tm" style="left:953.24px;top:28px"><i style="transform:scaleX(1.0547)">06:17PM</i></span>
</div>
<div class="row drow" style="top:455px;height:38px">
<span class="t q" style="left:7.26px;top:12px"><i style="transform:scaleX(1.0336)">609</i></span><span class="ici" style="left:72.70px;top:13.7px"><svg class="ic note" viewBox="0 0 10 10"><path d="M0 1 A1 1 0 0 1 1 0 H9 A1 1 0 0 1 10 1 V6.3 H7.3 A1 1 0 0 0 6.3 7.3 V10 H1 A1 1 0 0 1 0 9 Z"/><path d="M7 10 V7.6 A0.6 0.6 0 0 1 7.6 7 H10 V7.1 Q10 7.5 9.75 7.75 L7.75 9.75 Q7.5 10 7.1 10 Z"/></svg></span><span class="ici" style="left:91.90px;top:13.8px"><svg class="ic trash" viewBox="0 0 9 10"><path d="M3 0.1 H6 L6.5 0.9 H8.6 A0.4 0.4 0 0 1 9 1.3 V2.3 H0 V1.3 A0.4 0.4 0 0 1 0.4 0.9 H2.5 Z" fill="#9c9c9c"/><path d="M0.7 3 H8.3 L7.9 9.2 A0.85 0.85 0 0 1 7.05 10 H1.95 A0.85 0.85 0 0 1 1.1 9.2 Z" fill="#8a8a8a"/><path d="M2.5 4.1 H3.3 V8.9 H2.5 Z M4.1 4.1 H4.9 V8.9 H4.1 Z M5.7 4.1 H6.5 V8.9 H5.7 Z" fill="#b9b9b9"/></svg></span><span class="t c" style="left:117.66px;top:12px"><i style="transform:scaleX(0.9030)">444-111</i></span><span class="t c" style="left:191.50px;top:12px"><i style="transform:scaleX(0.8893)">Paperless Parts</i></span><span class="t c" style="left:286.05px;top:12px"><i style="transform:scaleX(0.9021)">Bob Smith</i></span><span class="t c" style="left:398.50px;top:12px"><i style="transform:scaleX(0.8698)">Alexis Sins</i></span><span class="t c" style="left:519.76px;top:12px"><i style="transform:scaleX(0.8961)">Erin Estimator</i></span><span class="t c" style="left:634.60px;top:12px"><i style="transform:scaleX(0.7492)">1</i></span>
<span class="t m" style="left:721.45px;top:12px"><i style="transform:scaleX(1.0000)">$435.65</i></span><span class="t d" style="left:788.16px;top:5px"><i style="transform:scaleX(1.0044)">07-31-2023</i></span><span class="t tm" style="left:805.30px;top:19px"><i style="transform:scaleX(1.0997)">02:39PM</i></span><span class="t db" style="left:854.31px;top:5px"><i style="transform:scaleX(1.0605)">08-01-2023</i></span><span class="t tm" style="left:874.30px;top:19px"><i style="transform:scaleX(1.0997)">02:39PM</i></span><span class="t d" style="left:932.02px;top:5px"><i style="transform:scaleX(1.0595)">08-05-2023</i></span><span class="t tm" style="left:951.90px;top:19px"><i style="transform:scaleX(1.0997)">02:39PM</i></span>
</div>
<div class="row drow" style="top:493px;height:55px">
<span class="t q" style="left:7.26px;top:21px"><i style="transform:scaleX(1.0130)">607</i></span><span class="ici" style="left:72.70px;top:22.7px"><svg class="ic note" viewBox="0 0 10 10"><path d="M0 1 A1 1 0 0 1 1 0 H9 A1 1 0 0 1 10 1 V6.3 H7.3 A1 1 0 0 0 6.3 7.3 V10 H1 A1 1 0 0 1 0 9 Z"/><path d="M7 10 V7.6 A0.6 0.6 0 0 1 7.6 7 H10 V7.1 Q10 7.5 9.75 7.75 L7.75 9.75 Q7.5 10 7.1 10 Z"/></svg></span><span class="ici" style="left:91.90px;top:22.8px"><svg class="ic trash" viewBox="0 0 9 10"><path d="M3 0.1 H6 L6.5 0.9 H8.6 A0.4 0.4 0 0 1 9 1.3 V2.3 H0 V1.3 A0.4 0.4 0 0 1 0.4 0.9 H2.5 Z" fill="#9c9c9c"/><path d="M0.7 3 H8.3 L7.9 9.2 A0.85 0.85 0 0 1 7.05 10 H1.95 A0.85 0.85 0 0 1 1.1 9.2 Z" fill="#8a8a8a"/><path d="M2.5 4.1 H3.3 V8.9 H2.5 Z M4.1 4.1 H4.9 V8.9 H4.1 Z M5.7 4.1 H6.5 V8.9 H5.7 Z" fill="#b9b9b9"/></svg></span><span class="t c" style="left:117.66px;top:21px"><i style="transform:scaleX(0.9013)">100-11</i></span><span class="t c" style="left:191.50px;top:21px"><i style="transform:scaleX(0.8742)">SpaceX</i></span><span class="t c" style="left:286.05px;top:21px"><i style="transform:scaleX(0.8909)">Cool Cucumber</i></span><span class="t c" style="left:398.50px;top:21px"><i style="transform:scaleX(0.8757)">Alex Sinson</i></span><span class="t c" style="left:519.76px;top:21px"><i style="transform:scaleX(0.8961)">Erin Estimator</i></span><span class="t c" style="left:634.60px;top:21px"><i style="transform:scaleX(0.9931)">5</i></span>
<span class="t m" style="left:711.66px;top:6px"><i style="transform:scaleX(1.0000)">$133.12 -</i></span><span class="t m" style="left:710.77px;top:21px"><i style="transform:scaleX(1.0000)">$26,322.5</i></span><span class="t m" style="left:753.40px;top:36px"><i style="transform:scaleX(1.0000)">4</i></span><span class="t d" style="left:788.53px;top:14px"><i style="transform:scaleX(0.9968)">07-21-2023</i></span><span class="t tm" style="left:806.25px;top:28px"><i style="transform:scaleX(1.0678)">12:04PM</i></span><span class="t db" style="left:852.72px;top:14px"><i style="transform:scaleX(1.0926)">08-04-2023</i></span><span class="t tm" style="left:874.95px;top:28px"><i style="transform:scaleX(1.0780)">12:00PM</i></span><span class="t d" style="left:933.37px;top:14px"><i style="transform:scaleX(1.0322)">07-26-2023</i></span><span class="t tm" style="left:952.85px;top:28px"><i style="transform:scaleX(1.0678)">12:04PM</i></span>
</div>
<div class="foot" style="top:548px"><svg class="chev" style="left:939.6px;top:7.8px" viewBox="0 0 6 10"><path d="M5.2 0.5 L1 5 L5.2 9.5" fill="none" stroke="#cacaca" stroke-width="1.1"/></svg><span class="pgbox" style="left:952px;top:5px"></span><span class="t pg" style="left:956.92px;top:6px"><i style="transform:scaleX(1.0000)">1</i></span><svg class="chev" style="left:974.7px;top:7.8px" viewBox="0 0 6 10"><path d="M0.8 0.5 L5 5 L0.8 9.5" fill="none" stroke="#cacaca" stroke-width="1.1"/></svg></div>
<div class="hline" style="top:80px;transform:translateY(0.45px)"></div><div class="hline" style="top:180px;transform:translateY(0.90px)"></div><div class="hline" style="top:221px;transform:translateY(0.40px)"></div><div class="hline" style="top:262px;transform:translateY(0.40px)"></div><div class="hline" style="top:300px;transform:translateY(0.80px)"></div><div class="hline" style="top:341px;transform:translateY(0.85px)"></div><div class="hline" style="top:397px;transform:translateY(0.60px)"></div><div class="hline" style="top:453px;transform:translateY(0.65px)"></div><div class="hline" style="top:491px;transform:translateY(0.80px)"></div><div class="hline" style="top:546px;transform:translateY(0.80px)"></div>
<div class="vline" style="left:110px;height:548px"></div>
</div>
<div class="corner-bl"></div><div class="corner-br"></div>
</div>
</body>
</html>
